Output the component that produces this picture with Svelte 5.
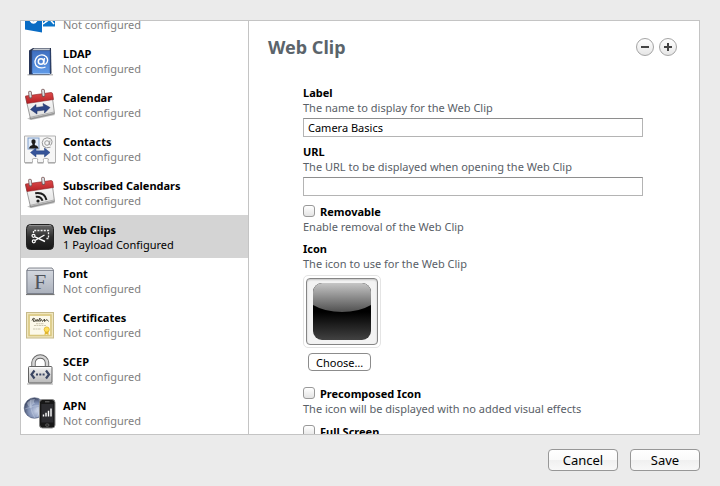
<script lang="ts">
  type Payload = { id: string; name: string; configured: number };

  const payloads: Payload[] = [
    { id: 'exchange', name: 'Exchange ActiveSync', configured: 0 },
    { id: 'ldap', name: 'LDAP', configured: 0 },
    { id: 'calendar', name: 'Calendar', configured: 0 },
    { id: 'contacts', name: 'Contacts', configured: 0 },
    { id: 'subscribed', name: 'Subscribed Calendars', configured: 0 },
    { id: 'webclips', name: 'Web Clips', configured: 1 },
    { id: 'font', name: 'Font', configured: 0 },
    { id: 'certificates', name: 'Certificates', configured: 0 },
    { id: 'scep', name: 'SCEP', configured: 0 },
    { id: 'apn', name: 'APN', configured: 0 },
  ];

  let selected = $state('webclips');
  let label = $state('Camera Basics');
  let url = $state('');
  let removable = $state(false);
  let precomposed = $state(false);
  let fullScreen = $state(false);

  let list: HTMLElement;

  // Start with the end of the payload list in view
  $effect(() => {
    list.scrollTop = list.scrollHeight;
  });
</script>

<svg class="defs" width="0" height="0" aria-hidden="true">
  <defs>
    <linearGradient id="blueBook" x1="0" y1="0" x2="0" y2="1">
      <stop offset="0" stop-color="#3f6fc0" />
      <stop offset="1" stop-color="#5f9ae8" />
    </linearGradient>
    <linearGradient id="red" x1="0" y1="0" x2="0" y2="1">
      <stop offset="0" stop-color="#de4a4a" />
      <stop offset="1" stop-color="#b31f24" />
    </linearGradient>
    <linearGradient id="paper" x1="0" y1="0" x2="0" y2="1">
      <stop offset="0" stop-color="#ffffff" />
      <stop offset="1" stop-color="#dcdcdc" />
    </linearGradient>
    <linearGradient id="dark" x1="0" y1="0" x2="0" y2="1">
      <stop offset="0" stop-color="#6c6c6c" />
      <stop offset="0.5" stop-color="#2c2c2c" />
      <stop offset="1" stop-color="#161616" />
    </linearGradient>
    <linearGradient id="steel" x1="0" y1="0" x2="0" y2="1">
      <stop offset="0" stop-color="#d3d7de" />
      <stop offset="1" stop-color="#abb1bc" />
    </linearGradient>
    <linearGradient id="silver" x1="0" y1="0" x2="0" y2="1">
      <stop offset="0" stop-color="#f4f4f4" />
      <stop offset="1" stop-color="#b9b9b9" />
    </linearGradient>
    <radialGradient id="globe" cx="0.6" cy="0.65" r="0.65">
      <stop offset="0" stop-color="#c6d0e6" />
      <stop offset="0.6" stop-color="#8090b4" />
      <stop offset="1" stop-color="#3d4763" />
    </radialGradient>
    <linearGradient id="gloss" x1="0" y1="0" x2="0" y2="1">
      <stop offset="0" stop-color="#c6c6c6" />
      <stop offset="1" stop-color="#505050" />
    </linearGradient>
    <linearGradient id="glossBase" x1="0" y1="0" x2="0" y2="1">
      <stop offset="0.5" stop-color="#000000" />
      <stop offset="1" stop-color="#444444" />
    </linearGradient>
  </defs>
</svg>

{#snippet calendarBase()}
  <path d="M3 29.500L30 24.500L31 26L7 31Z" fill="#777" opacity="0.5" />
  <path d="M1.500 8L28 5.500L30.500 24.500L6.500 30Z" fill="url(#paper)" stroke="#777" stroke-width="0.7" />
  <path d="M5.500 28.500L30 23M6 29.500L30.300 24.200" stroke="#888" stroke-width="0.6" />
  <path d="M1.500 7L27 3.500Q28.500 3.500 28.700 5L29.500 10.500L3 14.500Z" fill="url(#red)" stroke="#8c2024" stroke-width="0.6" />
  <path d="M6.500 8L6 3.500M19.500 6.500L19 1.500" stroke="#7c5555" stroke-width="3.500" stroke-linecap="round" />
  <path d="M6.500 7.500L6 3.500M19.500 6L19 1.500" stroke="#d9dde0" stroke-width="2" stroke-linecap="round" />
{/snippet}

{#snippet payloadIcon(id: string)}
  <svg class="icon" viewBox="0 0 32 32" width="32" height="32" aria-hidden="true">
    {#if id === 'exchange'}
      <path d="M1 4L18 1V31.500L1 28.500Z" fill="#0a6cc4" />
      <ellipse cx="9.500" cy="16" rx="3.500" ry="5.500" fill="none" stroke="#fff" stroke-width="2.500" />
      <path d="M19 8H31V25.500H19Z" fill="#0c74c8" />
      <path d="M19 17L22.500 20.500L31 14M19 23L22.500 20.500M26 18.500L30 23" fill="none" stroke="#fff" stroke-width="1.500" />
    {:else if id === 'ldap'}
      <path d="M3.500 29.800H29" stroke="#777" stroke-width="1.200" opacity="0.6" />
      <path d="M5 5.500L9 3H27L27.500 28.500L25 29.500H5Z" fill="#29344f" />
      <path d="M8 5.500L10 3.500H26L25.500 5.500Z" fill="#c3c8cf" />
      <path d="M5 6H8.500V29H5Z" fill="#283659" />
      <rect x="8" y="5.800" width="18" height="23" fill="url(#blueBook)" stroke="#3158a0" stroke-width="0.600" />
      <path d="M9 28.500H26" stroke="#9cc3f5" stroke-width="1" />
      <circle cx="17" cy="16.500" r="2.700" fill="none" stroke="#fff" stroke-width="1.500" />
      <path d="M20.500 13L19.600 18.200Q20 20 22 18.700Q25 15.500 22.500 12Q18.500 8 13.500 11.500Q9.500 15.500 12 20.500Q15.500 24.500 21.500 22" fill="none" stroke="#fff" stroke-width="1.300" />
    {:else if id === 'calendar'}
      {@render calendarBase()}
      <path d="M6.500 20.500L12 15.500V18.500L19.500 17.500L19 14.500L26 18.500L20.500 24V21L13 22V25Z" fill="#2d4586" stroke="#1e2e5e" stroke-width="0.500" />
    {:else if id === 'contacts'}
      <path d="M0.500 3H31.500V29.500H24V27.500Q25.500 25.500 23 25.500H20.500Q18.500 25.500 19.500 27.500V29.500H13.500V27.500Q14.500 25.500 12.500 25.500H10Q7.500 25.500 8.500 27.500V29.500H0.500Z" fill="#f6f6f6" stroke="#b1b1b1" />
      <path d="M1 30.200H8.500M13.500 30.200H19.500M24 30.200H31" stroke="#999" stroke-width="0.700" />
      <rect x="4" y="5" width="11" height="11" fill="#e2edfb" stroke="#7e9dc9" />
      <path d="M5 15.500Q5.500 12.500 8.300 12.300L8.500 11Q7 9.500 7.500 7.500Q9.500 5 11.500 7.500Q12 9.500 10.700 11L11 12.300Q14 12.500 14.500 15.500Z" fill="#1c1c1c" />
      <circle cx="23" cy="10" r="2.300" fill="none" stroke="#999" stroke-width="1" />
      <path d="M26 7.500L25.300 11.300Q26 13 27.500 11.300Q29 8 26.800 5.800Q23 3.500 19.500 6.200Q17.200 9.500 19 13Q22 16 26.500 14.200" fill="none" stroke="#999" stroke-width="1" />
      <path d="M6.500 19.500L12 15V17.800H20.500V15L26 19.500L20.500 24V21.200H12V24Z" fill="#365499" stroke="#24407e" stroke-width="0.500" />
    {:else if id === 'subscribed'}
      {@render calendarBase()}
      <circle cx="14" cy="24" r="1.600" fill="#1c1c1c" />
      <path d="M11.800 19.800Q17 19 18.500 23.800M11.200 16.300Q20.500 14.800 22.500 23" fill="none" stroke="#1c1c1c" stroke-width="2" />
    {:else if id === 'webclips'}
      <rect x="2.500" y="3.500" width="27" height="25" rx="4" fill="url(#dark)" stroke="#222" />
      <path d="M5 4.500H27" stroke="#999" stroke-width="0.800" />
      <path d="M9.500 12V9.500H24.500V17.500H22" fill="none" stroke="#eee" stroke-width="1.300" stroke-dasharray="2 1.200" />
      <path d="M11 15.800L21 20.500M11 19.500L20.500 14" stroke="#fff" stroke-width="1.400" />
      <circle cx="9.500" cy="14.800" r="1.500" fill="none" stroke="#fff" stroke-width="1.200" />
      <circle cx="9.800" cy="20.300" r="1.500" fill="none" stroke="#fff" stroke-width="1.200" />
    {:else if id === 'font'}
      <path d="M2 29.500H30.500" stroke="#777" stroke-width="1.200" />
      <path d="M3 5L4.500 3H28L29.500 5V28.500H3Z" fill="#e5e7eb" stroke="#666a73" stroke-width="0.800" />
      <rect x="3" y="5.500" width="26.500" height="23" fill="url(#steel)" stroke="#757b87" stroke-width="0.800" />
      <text x="16" y="24" class="font-glyph" text-anchor="middle">F</text>
    {:else if id === 'certificates'}
      <rect x="2.500" y="3.500" width="27" height="25.500" fill="#f0e6bd" stroke="#c6ba8a" />
      <rect x="5" y="6" width="22" height="20.500" fill="none" stroke="#d8c67e" stroke-width="1.500" />
      <rect x="6" y="7" width="20" height="18.500" fill="#fcf9ea" />
      <path d="M8 11.500Q9 8 10.500 9.500Q8 13 10.500 12.500L12 10.500V12.500L13.500 10.500L14 12.500L16 9V12.500L17.500 10.500L18.500 12.500L20.500 10V12.500L23 10.500L24.500 12.500" fill="none" stroke="#413d30" stroke-width="0.900" />
      <path d="M10 16.500H22M12 14.700H20M9 20H17" stroke="#b8b29a" stroke-width="0.700" stroke-dasharray="2 0.500" />
      <path d="M21 22L20.500 26L22.500 25L24.500 26L24.500 22" fill="#e1b72f" />
      <circle cx="22.700" cy="20.500" r="2.600" fill="#ffe05a" stroke="#d9ab24" stroke-width="0.700" />
    {:else if id === 'scep'}
      <path d="M3 31H29" stroke="#888" stroke-width="1.200" opacity="0.6" />
      <path d="M9.500 15V9.500A6.800 6.800 0 0 1 23 9.500V15" fill="none" stroke="#646464" stroke-width="4.400" />
      <path d="M9.500 15V9.500A6.800 6.800 0 0 1 23 9.500V15" fill="none" stroke="#d5d5d5" stroke-width="2.600" />
      <rect x="4.500" y="13.500" width="23.500" height="16.500" rx="1" fill="url(#silver)" stroke="#626262" />
      <path d="M6 14.700H27" stroke="#fff" />
      <path d="M10.500 17.500L7.500 21.500L10.500 25.500M22 17.500L25 21.500L22 25.500" fill="none" stroke="#3a4663" stroke-width="2.200" />
      <path d="M12 21.500H14M15.300 21.500H17.300M18.600 21.500H20.600" stroke="#3a4663" stroke-width="2" />
    {:else}
      <circle cx="10.500" cy="11" r="10.300" fill="url(#globe)" stroke="#4c5775" stroke-width="0.600" />
      <path d="M3 6Q6 2 11 2Q9 5 11 6.500Q7 8 7.500 11Q4 10 3 6M12 11Q15 8 19 11Q18 17 14 19Q14 14 12 11" fill="#dfe6f3" opacity="0.4" />
      <path d="M1 12Q10 8 20 8M7 1.500Q5 12 11 21M15 2Q18 11 13 20" fill="none" stroke="#d7e0f2" stroke-width="0.500" opacity="0.7" />
      <rect x="15.500" y="2.500" width="15.500" height="28.500" rx="3" fill="#171717" stroke="#888" />
      <path d="M21 4.800H25.500" stroke="#777" stroke-width="0.900" />
      <rect x="17.300" y="7" width="12" height="18.500" fill="#2c2c30" />
      <path d="M19.500 19.500V17.500M22 19.500V15.800M24.500 19.500V13.800M27 19.500V11.500" stroke="#fff" stroke-width="1.400" />
      <rect x="21.800" y="27" width="3" height="2.200" rx="0.600" fill="none" stroke="#888" stroke-width="0.600" />
    {/if}
  </svg>
{/snippet}

<div class="sheet">
  <div class="panel">
    <nav class="payloads" bind:this={list} aria-label="Payloads">
      {#each payloads as payload}
        <button
          class="payload"
          class:active={payload.id === selected}
          onclick={() => (selected = payload.id)}
        >
          {@render payloadIcon(payload.id)}
          <span class="payload-text">
            <span class="payload-name">{payload.name}</span>
            <span class="payload-status">
              {payload.configured ? `${payload.configured} Payload Configured` : 'Not configured'}
            </span>
          </span>
        </button>
      {/each}
    </nav>

    <section class="detail">
      <header>
        <h1>Web Clip</h1>
        <div class="round-buttons">
          <button class="round" aria-label="Remove payload">
            <svg viewBox="0 0 16 16" width="16" height="16"><path d="M4 8H12" stroke="#444" stroke-width="2" /></svg>
          </button>
          <button class="round" aria-label="Add payload">
            <svg viewBox="0 0 16 16" width="16" height="16"><path d="M4 8H12M8 4V12" stroke="#444" stroke-width="2" /></svg>
          </button>
        </div>
      </header>

      <form onsubmit={(e) => e.preventDefault()}>
        <div class="field">
          <label for="clip-label">Label</label>
          <p>The name to display for the Web Clip</p>
          <input id="clip-label" type="text" bind:value={label} />
        </div>

        <div class="field">
          <label for="clip-url">URL</label>
          <p>The URL to be displayed when opening the Web Clip</p>
          <input id="clip-url" type="text" bind:value={url} />
        </div>

        <div class="field">
          <label class="check">
            <input type="checkbox" bind:checked={removable} />
            Removable
          </label>
          <p>Enable removal of the Web Clip</p>
        </div>

        <div class="field icon-field">
          <label for="clip-icon">Icon</label>
          <p>The icon to use for the Web Clip</p>
          <div class="well">
            <div class="well-inner">
              <svg viewBox="0 0 58 58" width="58" height="58" aria-hidden="true">
                <clipPath id="tile"><rect width="58" height="57" rx="9" /></clipPath>
                <g clip-path="url(#tile)">
                  <rect width="58" height="58" fill="url(#glossBase)" />
                  <path d="M0 0H58V22Q46 29 29 29Q12 29 0 22Z" fill="url(#gloss)" />
                </g>
              </svg>
            </div>
          </div>
          <button id="clip-icon" class="choose" type="button">Choose…</button>
        </div>

        <div class="field">
          <label class="check">
            <input type="checkbox" bind:checked={precomposed} />
            Precomposed Icon
          </label>
          <p>The icon will be displayed with no added visual effects</p>
        </div>

        <div class="field">
          <label class="check">
            <input type="checkbox" bind:checked={fullScreen} />
            Full Screen
          </label>
        </div>
      </form>
    </section>
  </div>

  <footer>
    <button class="action">Cancel</button>
    <button class="action">Save</button>
  </footer>
</div>

<style>
  :global(body) {
    background: #ebebeb;
  }

  .defs {
    position: absolute;
  }

  .sheet {
    box-sizing: border-box;
    height: 100vh;
    padding: 20px 20px 15px;
    display: flex;
    flex-direction: column;
    gap: 14px;
    font-family: "Lucida Grande", "Noto Sans", "Open Sans", sans-serif;
    font-size: 11px;
    line-height: 15px;
    color: #000;
  }

  button,
  input {
    font-family: inherit;
    color: inherit;
  }

  .panel {
    flex: 1;
    min-height: 0;
    display: flex;
    background: #fff;
    border: 1px solid #c4c4c4;
  }

  .payloads {
    flex: 0 0 227px;
    display: flex;
    flex-direction: column;
    gap: 1px;
    overflow-y: auto;
    scrollbar-width: none;
    border-right: 1px solid #c4c4c4;
  }

  .payload {
    flex-shrink: 0;
    display: flex;
    align-items: center;
    gap: 7px;
    height: 43px;
    padding: 0 3px;
    border: 0;
    background: none;
    font-size: 11px;
    line-height: 15px;
    text-align: left;
  }

  .payload.active {
    background: #d4d4d4;
  }

  .icon {
    flex-shrink: 0;
    overflow: visible;
  }

  .font-glyph {
    font-family: "Liberation Serif", serif;
    font-size: 22px;
    fill: #4f545d;
  }

  .payload-name,
  .payload-status {
    display: block;
  }

  .payload-name {
    font-weight: bold;
  }

  .payload-status {
    color: #808080;
  }

  .active .payload-status {
    color: #000;
  }

  .detail {
    flex: 1;
    min-width: 0;
    overflow: hidden;
    padding: 14px 22px 0 19px;
  }

  header {
    display: flex;
    align-items: center;
    justify-content: space-between;
    height: 24px;
  }

  h1 {
    margin: 0;
    font-size: 18px;
    line-height: 24px;
    color: #5b646b;
  }

  .round-buttons {
    display: flex;
    gap: 5px;
  }

  .round {
    box-sizing: border-box;
    width: 18px;
    height: 18px;
    padding: 0;
    border: 1px solid #a4a4a4;
    border-radius: 50%;
    background: linear-gradient(#fff, #e6e6e6);
  }

  .round svg {
    display: block;
  }

  form {
    display: flex;
    flex-direction: column;
    gap: 7px;
    padding: 26px 34px 0 35px;
  }

  label {
    display: block;
    font-weight: bold;
  }

  p {
    margin: 0;
    color: #596067;
  }

  input[type='text'] {
    display: block;
    box-sizing: border-box;
    width: 100%;
    height: 19px;
    margin: 3px 0 0;
    padding: 0 4px;
    border: 1px solid #b4b4b4;
    border-top-color: #8e8e8e;
    border-radius: 0;
    background: #fff;
    font-size: 11px;
    outline: none;
  }

  .check {
    display: flex;
    align-items: center;
    gap: 5px;
    height: 16px;
  }

  .check input {
    appearance: none;
    box-sizing: border-box;
    width: 12px;
    height: 12px;
    margin: 0;
    border: 1px solid #999;
    border-radius: 3px;
    background: linear-gradient(#fff, #e4e4e4);
  }

  .check input:checked {
    background: #4a7fd0;
  }

  .icon-field {
    padding-bottom: 7px;
  }

  .well {
    box-sizing: border-box;
    width: 78px;
    margin-top: 4px;
    padding: 2px;
    border: 1px solid #e4e4e4;
    border-radius: 5px;
  }

  .well-inner {
    display: grid;
    place-items: center;
    height: 65px;
    border: 1px solid #858585;
    border-radius: 4px;
    background: #f3f3f3;
    box-shadow: inset 0 1px 2px rgba(0, 0, 0, 0.2);
  }

  .choose {
    height: 18px;
    margin: 5px 0 0 5px;
    padding: 0 7px;
    display: block;
    border: 1px solid #8c8c8c;
    border-radius: 4px;
    background: #fff;
    font-size: 11px;
    line-height: 15px;
  }

  footer {
    display: flex;
    justify-content: flex-end;
    gap: 12px;
  }

  .action {
    width: 70px;
    height: 22px;
    padding: 0;
    border: 1px solid #979797;
    border-radius: 4px;
    background: linear-gradient(#fff 0%, #fafafa 50%, #f0f0f0 51%, #f8f8f8 100%);
    font-size: 13px;
    line-height: 18px;
  }
</style>
